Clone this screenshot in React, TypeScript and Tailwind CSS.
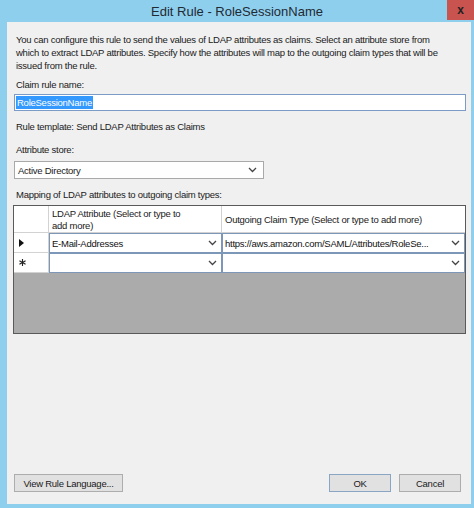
import React from "react";

const ui = { fontFamily: '"Liberation Sans", Arial, sans-serif' };

function Chevron() {
  return (
    <svg width="9" height="6" viewBox="0 0 9 6" className="shrink-0">
      <polyline points="1,1 4.5,4.5 8,1" fill="none" stroke="#444" strokeWidth="1.3" />
    </svg>
  );
}

function NewRowMark() {
  return (
    <svg width="7" height="7" viewBox="0 0 8 8">
      <g stroke="#222" strokeWidth="1.3">
        <line x1="4" y1="0" x2="4" y2="8" />
        <line x1="0.5" y1="2" x2="7.5" y2="6" />
        <line x1="0.5" y1="6" x2="7.5" y2="2" />
      </g>
    </svg>
  );
}

function ComboCell({ text, w }: { text: string; w: string }) {
  return (
    <div className={`${w} h-full border border-[#7d97b8] bg-white flex items-center pl-[2px] pr-[4px]`}>
      <span className="flex-1 truncate text-[#111]">{text}</span>
      <Chevron />
    </div>
  );
}

export default function App() {
  return (
    <div
      className="w-[474px] h-[508px] bg-[#8fcfee] flex flex-col text-[9.5px] leading-[13px] tracking-[-0.25px] text-[#1a1a1a] overflow-hidden"
      style={ui}
    >
      {/* title bar */}
      <div className="h-[22px] relative flex items-center justify-center shrink-0">
        <span className="text-[13px] tracking-normal text-[#1f2a33]">Edit Rule - RoleSessionName</span>
        <div className="absolute right-0 top-0 w-[27px] h-[20px] bg-[#c9534f] flex items-center justify-center">
          <span className="text-[12px] leading-[12px] font-bold text-[#222] tracking-normal">x</span>
        </div>
      </div>

      {/* client area */}
      <div className="flex-1 ml-[7px] mr-[3px] mb-[4px] bg-[#f0f0f0] pl-[7px] pr-[5px] pt-[11px] pb-[12px] flex flex-col">
        <p className="ml-[2px]">
          You can configure this rule to send the values of LDAP attributes as claims. Select an attribute store from
          <br />
          which to extract LDAP attributes. Specify how the attributes will map to the outgoing claim types that will be
          <br />
          issued from the rule.
        </p>

        <div className="ml-[2px] mt-[6px]">Claim rule name:</div>
        <div className="mt-[3px] h-[17px] border border-[#7a9cc6] bg-white flex items-center pl-[1px]">
          <span className="bg-[#3399ff] text-white leading-[13px] px-[1px]">RoleSessionName</span>
        </div>

        <div className="ml-[2px] mt-[9px]">Rule template: Send LDAP Attributes as Claims</div>

        <div className="ml-[2px] mt-[10px]">Attribute store:</div>
        <div className="mt-[5px] w-[250px] h-[18px] border border-[#a9a9a9] bg-white flex items-center pl-[3px] pr-[6px]">
          <span className="flex-1">Active Directory</span>
          <Chevron />
        </div>

        <div className="ml-[2px] mt-[9px]">Mapping of LDAP attributes to outgoing claim types:</div>

        {/* data grid */}
        <div className="mt-[4px] ml-[-1px] h-[129px] border border-[#5a5a5a] bg-[#ababab] flex flex-col">
          <div className="h-[27px] bg-white flex border-b border-[#d2d2d2]">
            <div className="w-[35px] border-r border-[#d2d2d2]" />
            <div className="w-[173px] border-r border-[#d2d2d2] pl-[3px] pt-[1px] leading-[12px] flex items-center">
              <span>
                LDAP Attribute (Select or type to
                <br />
                add more)
              </span>
            </div>
            <div className="flex-1 pl-[3px] flex items-center">Outgoing Claim Type (Select or type to add more)</div>
          </div>
          <div className="h-[20px] bg-white flex">
            <div className="w-[35px] h-full border-r border-b border-[#d2d2d2] flex items-center pl-[5px]">
              <svg width="5" height="8" viewBox="0 0 5 8">
                <polygon points="0,0 5,4 0,8" fill="#111" />
              </svg>
            </div>
            <ComboCell w="w-[173px]" text="E-Mail-Addresses" />
            <ComboCell w="flex-1" text="https://aws.amazon.com/SAML/Attributes/RoleSe..." />
          </div>
          <div className="h-[20px] bg-white flex">
            <div className="w-[35px] h-full border-r border-b border-[#d2d2d2] flex items-center pl-[5px]">
              <NewRowMark />
            </div>
            <ComboCell w="w-[173px]" text="" />
            <ComboCell w="flex-1" text="" />
          </div>
        </div>

        <div className="flex-1" />

        {/* buttons */}
        <div className="flex items-center pr-[5px]">
          <button className="w-[109px] h-[18px] border border-[#adadad] bg-[#e1e1e1] text-[#1a1a1a]">
            View Rule Language...
          </button>
          <div className="flex-1" />
          <button className="w-[62px] h-[18px] border border-[#8aa6c4] bg-[#e1e1e1] text-[#1a1a1a]">OK</button>
          <button className="ml-[8px] w-[62px] h-[18px] border border-[#adadad] bg-[#e1e1e1] text-[#1a1a1a]">
            Cancel
          </button>
        </div>
      </div>
    </div>
  );
}
